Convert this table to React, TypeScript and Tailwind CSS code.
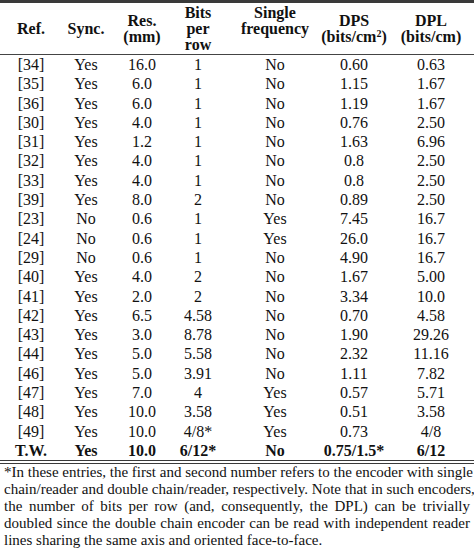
const rows: Array<[string, string, string, string, string, string, string]> = [
  ["[34]", "Yes", "16.0", "1", "No", "0.60", "0.63"],
  ["[35]", "Yes", "6.0", "1", "No", "1.15", "1.67"],
  ["[36]", "Yes", "6.0", "1", "No", "1.19", "1.67"],
  ["[30]", "Yes", "4.0", "1", "No", "0.76", "2.50"],
  ["[31]", "Yes", "1.2", "1", "No", "1.63", "6.96"],
  ["[32]", "Yes", "4.0", "1", "No", "0.8", "2.50"],
  ["[33]", "Yes", "4.0", "1", "No", "0.8", "2.50"],
  ["[39]", "Yes", "8.0", "2", "No", "0.89", "2.50"],
  ["[23]", "No", "0.6", "1", "Yes", "7.45", "16.7"],
  ["[24]", "No", "0.6", "1", "Yes", "26.0", "16.7"],
  ["[29]", "No", "0.6", "1", "No", "4.90", "16.7"],
  ["[40]", "Yes", "4.0", "2", "No", "1.67", "5.00"],
  ["[41]", "Yes", "2.0", "2", "No", "3.34", "10.0"],
  ["[42]", "Yes", "6.5", "4.58", "No", "0.70", "4.58"],
  ["[43]", "Yes", "3.0", "8.78", "No", "1.90", "29.26"],
  ["[44]", "Yes", "5.0", "5.58", "No", "2.32", "11.16"],
  ["[46]", "Yes", "5.0", "3.91", "No", "1.11", "7.82"],
  ["[47]", "Yes", "7.0", "4", "Yes", "0.57", "5.71"],
  ["[48]", "Yes", "10.0", "3.58", "Yes", "0.51", "3.58"],
  ["[49]", "Yes", "10.0", "4/8*", "Yes", "0.73", "4/8"],
];

const ours: [string, string, string, string, string, string, string] = [
  "T.W.", "Yes", "10.0", "6/12*", "No", "0.75/1.5*", "6/12",
];

const footnote = [
  "*In these entries, the first and second number refers to the encoder with single",
  "chain/reader and double chain/reader, respectively. Note that in such encoders,",
  "the number of bits per row (and, consequently, the DPL) can be trivially",
  "doubled since the double chain encoder can be read with independent reader",
];
const footnoteLast = "lines sharing the same axis and oriented face-to-face.";

// column widths: Ref 54 (8px left pad), Sync 64, Res 48, Bits 64, Single 90, DPS 68, DPL 86
const grid = "grid grid-cols-[54px_64px_48px_64px_90px_68px_86px] text-center";

function Row({ cells, bold }: { cells: string[]; bold?: boolean }) {
  return (
    <div className={`${grid} h-[19.3px] leading-[19.3px] ${bold ? "font-bold" : ""}`}>
      {cells.map((v, i) => (
        <div key={i} className={`whitespace-nowrap flex justify-center ${i === 0 ? "pl-[8px]" : ""}`}>
          {v}
        </div>
      ))}
    </div>
  );
}

export default function App() {
  return (
    <div
      className="w-[474px] h-[551px] bg-white text-[#111] overflow-hidden"
      style={{ fontFamily: '"Liberation Serif", "Times New Roman", serif' }}
    >
      <div className="h-[3px] bg-[#3a3a3a]" />

      {/* header */}
      <div className={`${grid} h-[52px] items-center font-bold text-[16px] leading-[16px] border-b border-[#444]`}>
        <div className="pl-[8px]">Ref.</div>
        <div>Sync.</div>
        <div>
          Res.
          <br />
          (mm)
        </div>
        <div>
          Bits
          <br />
          per
          <br />
          row
        </div>
        <div className="pb-[16px]">
          Single
          <br />
          frequency
        </div>
        <div className="whitespace-nowrap flex flex-col items-center">
          <span>DPS</span>
          <span>
            (bits/cm<sup className="text-[10px]">2</sup>)
          </span>
        </div>
        <div>
          DPL
          <br />
          (bits/cm)
        </div>
      </div>

      {/* body */}
      <div className="text-[16px]">
        {rows.map((r) => (
          <Row key={r[0]} cells={r} />
        ))}
        <Row cells={ours} bold />
      </div>

      <div className="h-[1.2px] bg-[#3a3a3a]" />
      <div className="mt-[1.4px] h-[1.2px] bg-[#3a3a3a]" />

      {/* footnote */}
      <div className="px-[4px] text-[15px] leading-[16.9px]">
        {footnote.map((line) => (
          <div key={line} className="text-justify [text-align-last:justify] whitespace-nowrap">
            {line}
          </div>
        ))}
        <div>{footnoteLast}</div>
      </div>
    </div>
  );
}
